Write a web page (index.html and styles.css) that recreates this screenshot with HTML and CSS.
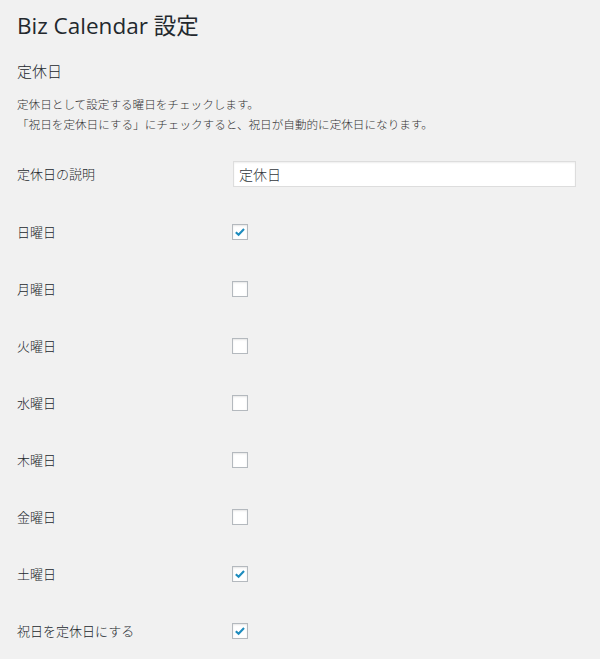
FILE: index.html
```html
<!DOCTYPE html>
<html lang="ja">
<head>
<meta charset="utf-8">
<title>Biz Calendar 設定</title>
<link rel="stylesheet" href="styles.css">
</head>
<body>
<div class="wrap">
  <h1 class="title">Biz Calendar 設定</h1>
  <h2 class="section">定休日</h2>
  <p class="desc">定休日として設定する曜日をチェックします。<br>「祝日を定休日にする」にチェックすると、祝日が自動的に定休日になります。</p>
  <div class="form">
    <div class="row row-input">
      <div class="label">定休日の説明</div>
      <div class="field"><input class="text" type="text" value="定休日"></div>
    </div>
    <div class="row">
      <div class="label">日曜日</div>
      <div class="field"><span class="cb checked"><svg viewBox="0 0 16 16"><path d="M3.2 8.2 L6.4 11.2 L12.6 4.6" /></svg></span></div>
    </div>
    <div class="row">
      <div class="label">月曜日</div>
      <div class="field"><span class="cb"></span></div>
    </div>
    <div class="row">
      <div class="label">火曜日</div>
      <div class="field"><span class="cb"></span></div>
    </div>
    <div class="row">
      <div class="label">水曜日</div>
      <div class="field"><span class="cb"></span></div>
    </div>
    <div class="row">
      <div class="label">木曜日</div>
      <div class="field"><span class="cb"></span></div>
    </div>
    <div class="row">
      <div class="label">金曜日</div>
      <div class="field"><span class="cb"></span></div>
    </div>
    <div class="row">
      <div class="label">土曜日</div>
      <div class="field"><span class="cb checked"><svg viewBox="0 0 16 16"><path d="M3.2 8.2 L6.4 11.2 L12.6 4.6" /></svg></span></div>
    </div>
    <div class="row">
      <div class="label">祝日を定休日にする</div>
      <div class="field"><span class="cb checked"><svg viewBox="0 0 16 16"><path d="M3.2 8.2 L6.4 11.2 L12.6 4.6" /></svg></span></div>
    </div>
  </div>
</div>
</body>
</html>
```
FILE: styles.css
```css
html, body {
  margin: 0;
  padding: 0;
  background: #f1f1f1;
}
body {
  font-family: "Noto Sans", "Noto Sans CJK JP", sans-serif;
  color: #23282d;
  height: 659px;
  overflow: hidden;
}
.wrap {
  padding: 0 0 0 17px;
}
.title {
  font-family: "Open Sans", "Noto Sans CJK JP", sans-serif;
  font-weight: 400;
  font-size: 22.5px;
  line-height: 30px;
  margin: 0;
  padding-top: 11px;
  color: #23282d;
}
.section {
  font-family: "Noto Sans CJK JP", sans-serif;
  font-weight: 300;
  font-size: 15px;
  line-height: 20px;
  margin: 20px 0 0 0;
  color: #23282d;
}
.desc {
  font-family: "Noto Sans CJK JP", sans-serif;
  font-weight: 300;
  font-size: 11.6px;
  line-height: 20px;
  margin: 13px 0 0 0;
  color: #333;
}
.form {
  margin-top: 10px;
  display: flex;
  flex-direction: column;
}
.row {
  display: grid;
  grid-template-columns: 215px 1fr;
  align-items: center;
  height: 57px;
}
.row-input {
  height: 59px;
}
.label {
  font-family: "Noto Sans CJK JP", sans-serif;
  font-weight: 300;
  font-size: 13px;
  color: #23282d;
}
.field {
  display: flex;
  align-items: center;
}
.text {
  box-sizing: border-box;
  width: 343px;
  height: 26px;
  margin: 0 0 0 1px;
  padding: 0 5px;
  border: 1px solid #dddddd;
  background: #fff;
  box-shadow: inset 0 1px 2px rgba(0,0,0,0.07);
  font-family: "Noto Sans CJK JP", sans-serif;
  font-weight: 300;
  font-size: 14px;
  color: #32373c;
  outline: none;
}
.cb {
  box-sizing: border-box;
  width: 16px;
  height: 16px;
  border: 1px solid #b4b9be;
  background: #fff;
  box-shadow: inset 0 1px 2px rgba(0,0,0,0.1);
  display: block;
}
.cb svg {
  display: block;
  width: 14px;
  height: 14px;
}
.cb svg path {
  fill: none;
  stroke: #1e8cbe;
  stroke-width: 2.4;
  stroke-linecap: butt;
  stroke-linejoin: miter;
}
```
